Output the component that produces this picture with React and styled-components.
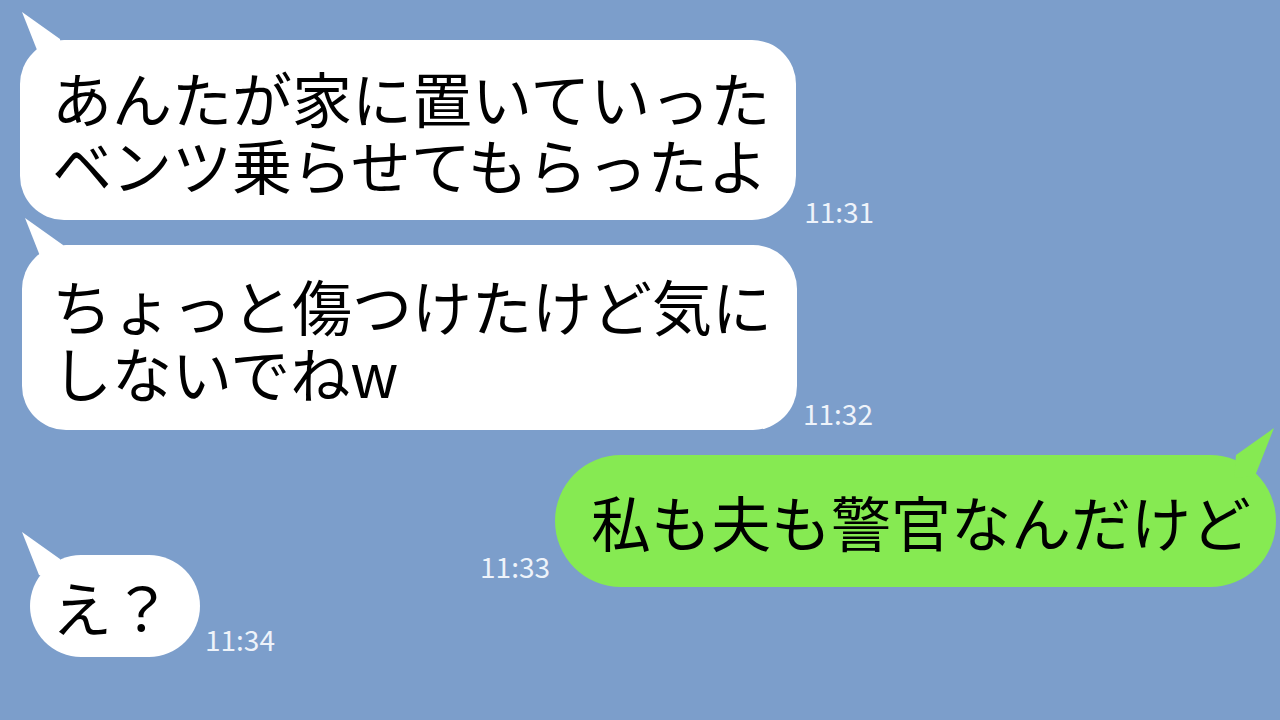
import React from "react";
import styled, { createGlobalStyle } from "styled-components";

const GlobalStyle = createGlobalStyle`
  html, body {
    margin: 0;
    padding: 0;
  }
  body {
    font-family: "Noto Sans CJK JP", "Noto Sans", sans-serif;
  }
`;

const Screen = styled.div`
  width: 1280px;
  height: 720px;
  overflow: hidden;
  background: #7c9ecb;
  padding-top: 40px;
  box-sizing: border-box;
  display: flex;
  flex-direction: column;
`;

const Row = styled.div`
  display: flex;
  align-items: flex-end;
  justify-content: ${(p) => (p.$mine ? "flex-end" : "flex-start")};
  margin-top: ${(p) => p.$gap || 0}px;
  padding-left: ${(p) => p.$left || 0}px;
  padding-right: ${(p) => p.$right || 0}px;
`;

const Bubble = styled.div`
  position: relative;
  background: ${(p) => (p.$mine ? "#86ea52" : "#ffffff")};
  color: #000;
  font-family: "Noto Sans CJK JP", sans-serif;
  font-size: 60px;
  line-height: 67px;
  white-space: pre-line;
  border-radius: ${(p) => p.$radius || 44}px;
  padding: ${(p) => p.$pad};

  &::before {
    content: "";
    position: absolute;
    width: 45px;
    height: 50px;
    background: inherit;
    border-radius: 0;
    top: ${(p) => p.$tailTop}px;
    ${(p) =>
      p.$mine
        ? `right: 2px; clip-path: polygon(45px 0, 26px 48px, 5px 50px, 7px 27px);`
        : `left: ${p.$tailLeft}px; clip-path: polygon(0 0, 38px 27px, 40px 50px, 17px 43px);`}
  }
`;

const Time = styled.span`
  font-family: "Noto Sans CJK JP", sans-serif;
  font-size: 28px;
  line-height: 28px;
  color: #eef3fa;
  margin: 0 ${(p) => p.$right || 0}px ${(p) => p.$bottom}px ${(p) => p.$left || 0}px;
  white-space: nowrap;
`;

export default function App() {
  return (
    <>
      <GlobalStyle />
      <Screen>
        <Row $left={20}>
          <Bubble $pad="23px 26px 23px 32px" $tailTop={-28} $tailLeft={2}>
            {"あんたが家に置いていった\nベンツ乗らせてもらったよ"}
          </Bubble>
          <Time $left={8} $bottom={-5}>11:31</Time>
        </Row>
        <Row $left={22} $gap={25}>
          <Bubble $pad="26px 25px 25px 30px" $tailTop={-27} $tailLeft={3}>
            {"ちょっと傷つけたけど気に\nしないでねw"}
          </Bubble>
          <Time $left={6} $bottom={3}>11:32</Time>
        </Row>
        <Row $mine $right={4} $gap={25}>
          <Time $right={5} $bottom={7}>11:33</Time>
          <Bubble $mine $radius={66} $pad="32px 25px 33px 36px" $tailTop={-27}>
            私も夫も警官なんだけど
          </Bubble>
        </Row>
        <Row $left={30} $gap={-32}>
          <Bubble $radius={51} $pad="17px 28px 18px 22px" $tailTop={-23} $tailLeft={-8}>
            え？
          </Bubble>
          <Time $left={5} $bottom={4}>11:34</Time>
        </Row>
      </Screen>
    </>
  );
}
